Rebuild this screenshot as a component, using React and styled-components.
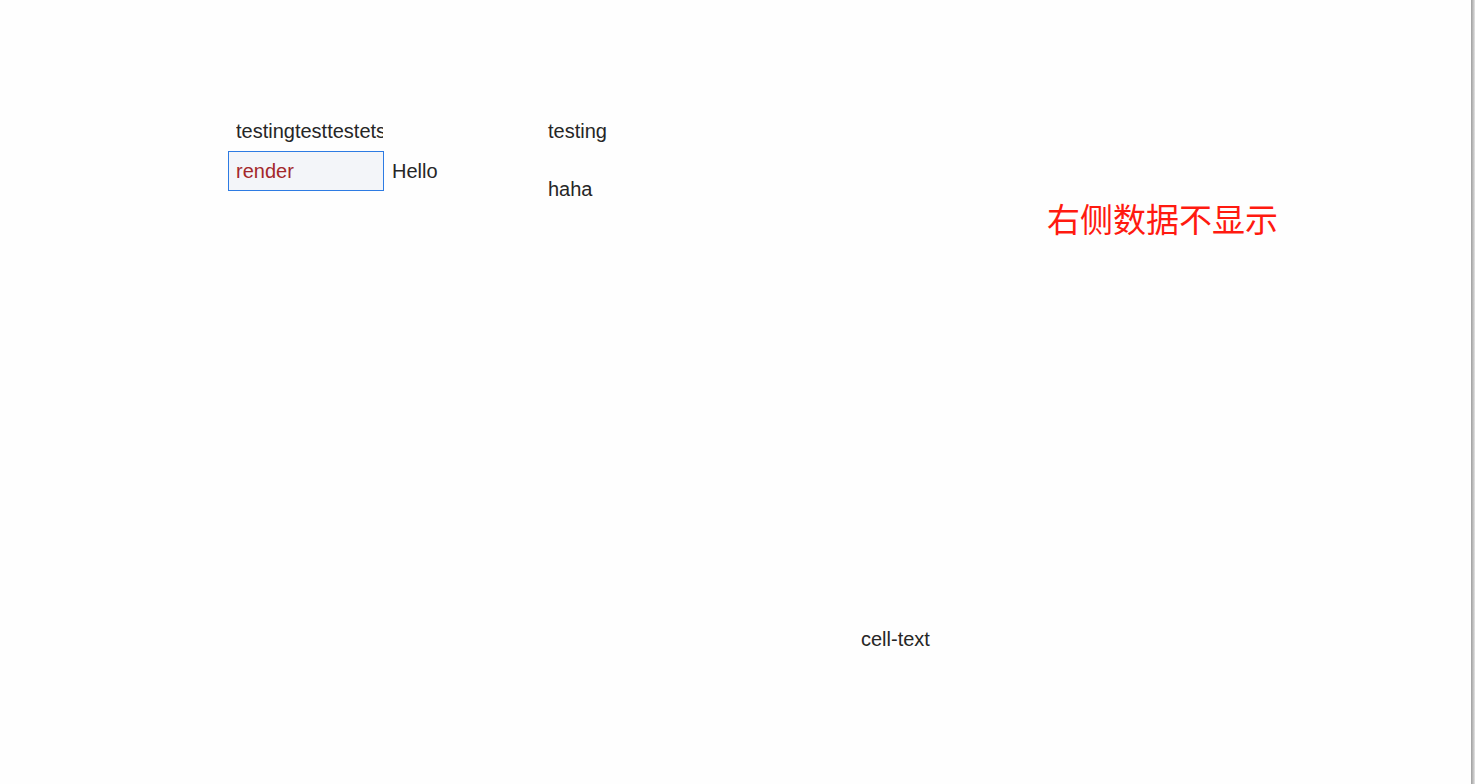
import React from 'react';
import styled, { createGlobalStyle } from 'styled-components';

const GlobalStyle = createGlobalStyle`
  html, body {
    margin: 0;
    padding: 0;
    background: #fefefe;
    overflow: hidden;
  }
  body {
    font-family: "Liberation Sans", Arial, "Noto Sans CJK SC", sans-serif;
  }
`;

const Frame = styled.div`
  display: flex;
  width: 1475px;
  height: 784px;
`;

const Sheet = styled.div`
  flex: 1;
  display: grid;
  grid-template-columns: 228px 156px 156px 313px 186px 1fr;
  grid-template-rows: 111px 40px 40px 58px 370px 40px 1fr;
  background: #fefefe;
`;

const ScrollEdge = styled.div`
  width: 4px;
  background: linear-gradient(to right, #9e9e9e, #c4c4c4 60%, #e6e6e6);
`;

const Cell = styled.div`
  grid-column: ${(p) => p.$col};
  grid-row: ${(p) => p.$row};
  display: flex;
  align-items: ${(p) => (p.$top ? 'flex-start' : 'center')};
  padding: ${(p) => (p.$top ? `${p.$top}px 8px 0` : '0 8px')};
  overflow: hidden;
  white-space: nowrap;
  font-size: 20px;
  color: #262626;
  box-sizing: border-box;
`;

const Clip = styled.span`
  display: block;
  flex-shrink: 0;
  width: ${(p) => p.$w}px;
  overflow: hidden;
  white-space: nowrap;
`;

const EditCell = styled(Cell)`
  padding: 1px 7px 0;
  border: 1px solid #2d7be3;
  background: #f3f5f9;
  color: #a3282b;
  height: 40px;
`;

const Notice = styled(Cell)`
  font-family: "Noto Sans CJK SC", "Liberation Sans", sans-serif;
  font-size: 33px;
  color: #ff1a10;
  padding: 0 0 5px 8px;
`;

export default function App() {
  return (
    <>
      <GlobalStyle />
      <Frame>
        <Sheet>
          <Cell $col={2} $row={2}>
            <Clip $w={147}>testingtesttestetstest</Clip>
          </Cell>
          <Cell $col={4} $row={2}>testing</Cell>
          <EditCell $col={2} $row={3}>render</EditCell>
          <Cell $col={3} $row={3}>Hello</Cell>
          <Cell $col={4} $row="3 / 5" $top={27}>haha</Cell>
          <Notice $col={6} $row={4}>右侧数据不显示</Notice>
          <Cell $col={5} $row={6}>cell-text</Cell>
        </Sheet>
        <ScrollEdge />
      </Frame>
    </>
  );
}
